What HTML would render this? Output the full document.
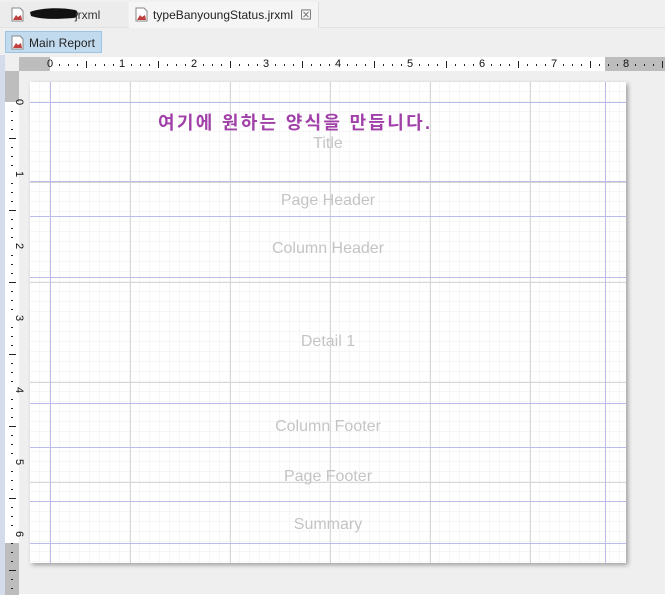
<!DOCTYPE html>
<html><head><meta charset="utf-8"><style>
body{margin:0;width:665px;height:610px;overflow:hidden;background:#fff;font-family:"Liberation Sans","Noto Sans CJK KR",sans-serif}
</style></head><body>
<svg width="665" height="610" xmlns="http://www.w3.org/2000/svg" style="display:block">
<defs>
<pattern id="minor" x="30" y="82" width="10" height="10" patternUnits="userSpaceOnUse">
<path d="M10 0V10M0 10H10" stroke="#eeeeee" stroke-width="1" fill="none"/>
</pattern>
<pattern id="hr" x="50" y="57" width="72" height="14" patternUnits="userSpaceOnUse">
<rect x="9" y="7" width="1" height="2" fill="#222"/><rect x="18" y="7" width="1" height="2" fill="#222"/><rect x="27" y="7" width="1" height="2" fill="#222"/>
<rect x="36" y="4" width="1" height="7" fill="#222"/>
<rect x="45" y="7" width="1" height="2" fill="#222"/><rect x="54" y="7" width="1" height="2" fill="#222"/><rect x="63" y="7" width="1" height="2" fill="#222"/>
</pattern>
<pattern id="vr" x="5" y="102" width="14" height="72" patternUnits="userSpaceOnUse">
<rect x="6" y="9" width="2" height="1" fill="#222"/><rect x="6" y="18" width="2" height="1" fill="#222"/><rect x="6" y="27" width="2" height="1" fill="#222"/>
<rect x="4" y="36" width="7" height="1" fill="#222"/>
<rect x="6" y="45" width="2" height="1" fill="#222"/><rect x="6" y="54" width="2" height="1" fill="#222"/><rect x="6" y="63" width="2" height="1" fill="#222"/>
</pattern>
<filter id="sh" x="-5%" y="-5%" width="110%" height="110%"><feDropShadow dx="2" dy="2" stdDeviation="2.5" flood-color="#000" flood-opacity="0.35"/></filter>
</defs>
<rect x="0" y="0" width="665" height="594" fill="#efefef"/>
<rect x="0" y="0" width="665" height="28" fill="#f0f0f0"/>
<rect x="0" y="27" width="665" height="1" fill="#e2e2e2"/>
<rect x="0" y="2" width="128" height="25" fill="#ececec"/>
<rect x="129" y="2" width="189" height="26" fill="#f5f5f5"/>
<rect x="318" y="2" width="1" height="25" fill="#dcdcdc"/>
<path d="M12 8h8l3 3v10h-11z" fill="#fff" stroke="#888"/>
<path d="M13 20l3-5 2 2 3-2 1 5z" fill="#c04040"/>
<path d="M30 12c10-4 30-5 45-2 4 1 4 8 -2 8-15 1-30 2-42-2z" fill="#111"/>
<text x="75" y="19" font-size="12" fill="#333">jrxml</text>
<g transform="translate(124 0)"><path d="M12 8h8l3 3v10h-11z" fill="#fff" stroke="#888"/><path d="M13 20l3-5 2 2 3-2 1 5z" fill="#c04040"/></g>
<text x="153" y="19" font-size="12" fill="#222" textLength="140">typeBanyoungStatus.jrxml</text>
<text x="300" y="19" font-size="12" fill="#666">⊠</text>
<rect x="5.5" y="31.5" width="96" height="21" fill="#c2daee" stroke="#9ec4e4"/>
<g transform="translate(0 28)"><path d="M12 8h8l3 3v10h-11z" fill="#fff" stroke="#888"/><path d="M13 20l3-5 2 2 3-2 1 5z" fill="#c04040"/></g>
<text x="29" y="47" font-size="12" fill="#222" textLength="66">Main Report</text>
<rect x="0" y="55" width="5" height="540" fill="#d4dcec"/>
<rect x="19" y="57" width="646" height="14" fill="#fff"/>
<rect x="19" y="57" width="31" height="14" fill="#bdbdbd"/>
<rect x="605" y="57" width="60" height="14" fill="#bdbdbd"/>
<rect x="50" y="57" width="615" height="14" fill="url(#hr)"/>
<g font-size="11" fill="#111" text-anchor="middle">
<text x="50" y="67">0</text><text x="122" y="67">1</text><text x="194" y="67">2</text><text x="266" y="67">3</text><text x="338" y="67">4</text><text x="410" y="67">5</text><text x="482" y="67">6</text><text x="554" y="67">7</text><text x="626" y="67">8</text>
</g>
<rect x="5" y="71" width="14" height="524" fill="#fff"/>
<rect x="5" y="71" width="14" height="31" fill="#bdbdbd"/>
<rect x="5" y="543" width="14" height="52" fill="#bdbdbd"/>
<rect x="5" y="102" width="14" height="493" fill="url(#vr)"/>
<g font-size="11" fill="#111" text-anchor="middle">
<text transform="translate(16 102) rotate(90)">0</text>
<text transform="translate(16 174) rotate(90)">1</text>
<text transform="translate(16 246) rotate(90)">2</text>
<text transform="translate(16 318) rotate(90)">3</text>
<text transform="translate(16 390) rotate(90)">4</text>
<text transform="translate(16 462) rotate(90)">5</text>
<text transform="translate(16 534) rotate(90)">6</text>
</g>
<rect x="30" y="82" width="596" height="481" fill="#fff" filter="url(#sh)"/>
<rect x="30" y="82" width="596" height="481" fill="url(#minor)"/>
<g stroke="#d6d6d6" stroke-width="1">
<path d="M130.5 82V563M230.5 82V563M330.5 82V563M430.5 82V563M530.5 82V563M30 182.5H626M30 282.5H626M30 382.5H626M30 482.5H626"/>
</g>
<g stroke="#bcbcec" stroke-width="1">
<path d="M50.5 82V563M605.5 82V563"/>
<path d="M30 102.5H626M30 181.5H626M30 216.5H626M30 277.5H626M30 403.5H626M30 447.5H626M30 501.5H626M30 543.5H626"/>
</g>
<g font-size="16" fill="#c4c4c4" text-anchor="middle">
<text x="328" y="148">Title</text>
<text x="328" y="205">Page Header</text>
<text x="328" y="253">Column Header</text>
<text x="328" y="346">Detail 1</text>
<text x="328" y="431">Column Footer</text>
<text x="328" y="481">Page Footer</text>
<text x="328" y="529">Summary</text>
</g>
<text x="158" y="129" font-size="18" font-weight="bold" fill="#a040a8" textLength="272" lengthAdjust="spacing">여기에 원하는 양식을 만듭니다.</text>
</svg>
</body></html>
